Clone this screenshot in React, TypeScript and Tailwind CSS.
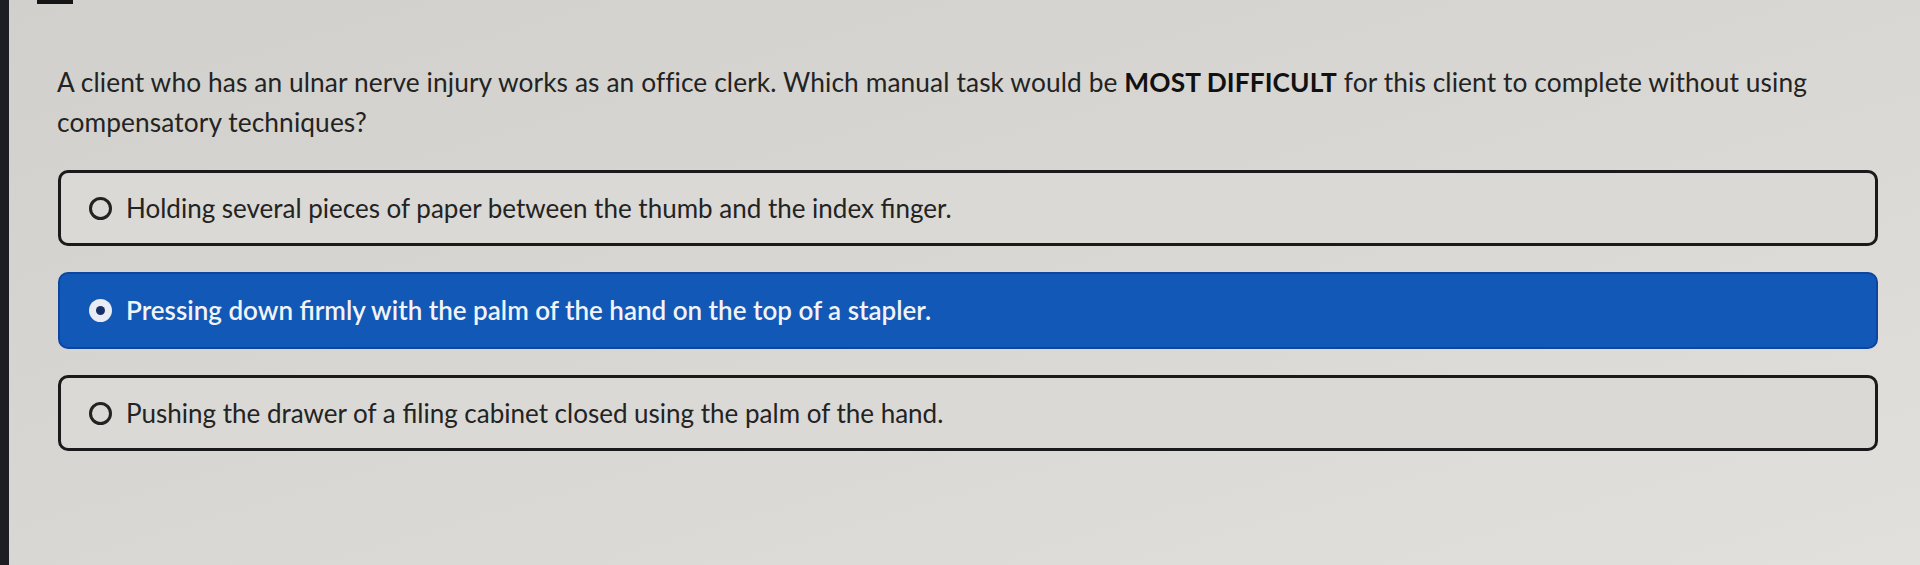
import { useState } from "react"

const OPTIONS = [
  "Holding several pieces of paper between the thumb and the index finger.",
  "Pressing down firmly with the palm of the hand on the top of a stapler.",
  "Pushing the drawer of a filing cabinet closed using the palm of the hand.",
]

function Radio({ checked }: { checked: boolean }) {
  if (checked) {
    return (
      <span className="flex h-[23px] w-[23px] shrink-0 items-center justify-center rounded-full bg-[#e9ecf2]">
        <span className="h-[9px] w-[9px] rounded-full bg-[#17306a]" />
      </span>
    )
  }
  return <span className="h-[23px] w-[23px] shrink-0 rounded-full border-[3px] border-[#222222]" />
}

export default function App() {
  const [selected, setSelected] = useState(1)

  return (
    <div className="flex h-[565px] w-full overflow-hidden" style={{ fontFamily: "Lato, 'Noto Sans', sans-serif" }}>
      <div className="w-[9px] shrink-0 bg-[#1d1e23]" />
      <div className="flex flex-1 flex-col bg-gradient-to-br from-[#d1d0cc] via-[#d8d7d3] to-[#e1e0dd] pr-[42px]">
        <div className="ml-[28px] h-[4px] w-[36px] bg-[#151515]" />

        <p className="ml-[48px] mt-[58px] text-[26.3px] leading-[40px] tracking-[0.1px] text-[#232323]">
          A client who has an ulnar nerve injury works as an office clerk. Which manual task would be{" "}
          <span className="font-bold text-[#111111]">MOST DIFFICULT</span> for this client to complete without using
          compensatory techniques?
        </p>

        <div className="ml-[49px] mt-[28px] flex flex-col gap-[26px]">
          {OPTIONS.map((text, i) => {
            const on = i === selected
            return (
              <button
                key={i}
                onClick={() => setSelected(i)}
                className={
                  on
                    ? "flex h-[77px] items-center gap-[14px] rounded-[10px] border-2 border-[#0c46a0] bg-[#1258b6] pl-[29px] text-left"
                    : "flex h-[76px] items-center gap-[14px] rounded-[10px] border-[3px] border-[#1a1a1a] bg-[#dad9d5] pl-[28px] text-left"
                }
              >
                <Radio checked={on} />
                <span
                  className={
                    on
                      ? "text-[26px] font-semibold text-[#f1f3f7]"
                      : "text-[26px] text-[#232323]"
                  }
                >
                  {text}
                </span>
              </button>
            )
          })}
        </div>
      </div>
    </div>
  )
}
